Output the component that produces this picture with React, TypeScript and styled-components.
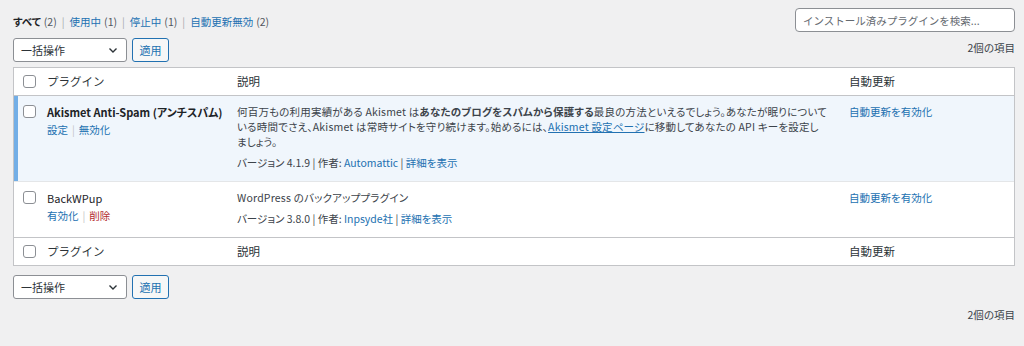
import React from "react";
import styled, { createGlobalStyle, css } from "styled-components";

const Global = createGlobalStyle`
  html, body { margin: 0; padding: 0; background: #f0f0f1; }
  body {
    font-family: "Noto Sans CJK JP", "Noto Sans", sans-serif;
    font-size: 10.5px;
    color: #3c434a;
    font-feature-settings: "palt";
  }
  * { box-sizing: border-box; }
`;

const Wrap = styled.div`
  padding: 8px 9px 20px 13px;
`;

const TopBar = styled.div`
  display: flex;
  justify-content: space-between;
  align-items: center;
  height: 24px;
`;

const Filters = styled.ul`
  display: flex;
  align-items: center;
  margin: 0;
  padding: 4px 0 0;
  list-style: none;
  line-height: 18px;
`;

const FilterItem = styled.li`
  display: flex;
  align-items: center;
`;

const FilterLink = styled.a<{ $current?: boolean }>`
  color: ${(p) => (p.$current ? "#1d2327" : "#2271b1")};
  font-weight: ${(p) => (p.$current ? 700 : 400)};
  text-decoration: none;
`;

const FilterCount = styled.span`
  color: #50575e;
  margin-left: 3px;
`;

const Sep = styled.span`
  color: #a7aaad;
  margin: 0 5px;
`;

const Search = styled.input`
  width: 220px;
  height: 24px;
  border: 1px solid #8c8f94;
  border-radius: 4px;
  background: #fff;
  padding: 0 7px;
  font: inherit;
  font-size: 10.5px;
  font-feature-settings: normal;
  color: #2c3338;
  &::placeholder { color: #646970; }
`;

const TableNav = styled.div<{ $top?: boolean }>`
  display: flex;
  justify-content: space-between;
  align-items: center;
  height: 24px;
  margin-top: ${(p) => (p.$top ? "6px" : "9px")};
`;

const BulkActions = styled.div`
  display: flex;
  gap: 5px;
`;

const BulkSelect = styled.div`
  width: 114px;
  height: 24px;
  border: 1px solid #8c8f94;
  border-radius: 3px;
  background: #fff;
  display: flex;
  align-items: center;
  justify-content: space-between;
  padding: 0 7px;
  color: #2c3338;
  font-size: 11px;
`;

const ApplyButton = styled.button`
  height: 24px;
  width: 37px;
  padding: 0;
  border: 1px solid #2271b1;
  border-radius: 3px;
  background: #f6f7f7;
  color: #2271b1;
  font: inherit;
  font-size: 11px;
`;

const Count = styled.div`
  color: #3c434a;
  line-height: 18px;
  margin-bottom: 4px;
`;

const CountRow = styled.div`
  text-align: right;
  line-height: 18px;
  margin-top: 7px;
`;

const Table = styled.table`
  width: 100%;
  margin-top: 5px;
  border: 1px solid #c3c4c7;
  border-spacing: 0;
  border-collapse: separate;
  background: #fff;
  table-layout: fixed;
`;

const Col = styled.col<{ $w?: number }>`
  ${(p) => p.$w && css`width: ${p.$w}px;`}
`;

const HeadCell = styled.th<{ $check?: boolean; $foot?: boolean }>`
  text-align: left;
  font-weight: 400;
  color: #2c3338;
  font-size: 11.5px;
  font-feature-settings: normal;
  line-height: 19px;
  padding: ${(p) => (p.$check ? "4px 0 4px 9px" : "4px 10px")};
  vertical-align: middle;
  ${(p) =>
    p.$foot
      ? css`border-top: 1px solid #c3c4c7;`
      : css`border-bottom: 1px solid #c3c4c7;`}
`;

const Row = styled.tr<{ $active?: boolean }>`
  background: ${(p) => (p.$active ? "#f0f6fc" : "#fff")};
  ${(p) =>
    p.$active &&
    css`
      & > * { border-bottom: 1px solid #e4e6e8; }
    `}
`;

const CheckCell = styled.th<{ $active?: boolean }>`
  padding: 9px 0 0 9px;
  vertical-align: top;
  box-shadow: ${(p) => (p.$active ? "inset 4px 0 0 #72aee6" : "none")};
`;

const Cell = styled.td`
  padding: 8px 10px 11px;
  vertical-align: top;
`;

const Checkbox = styled.span`
  display: block;
  width: 13px;
  height: 13px;
  border: 1px solid #8c8f94;
  border-radius: 3px;
  background: #fff;
`;

const PluginTitle = styled.div<{ $active?: boolean }>`
  line-height: 16px;
  font-size: 11px;
  white-space: nowrap;
  color: #1d2327;
  font-weight: ${(p) => (p.$active ? 700 : 400)};
`;

const RowActions = styled.div`
  margin-top: 2px;
  line-height: 16px;
  display: flex;
  align-items: center;
`;

const ActionLink = styled.a<{ $danger?: boolean }>`
  color: ${(p) => (p.$danger ? "#b32d2e" : "#2271b1")};
  text-decoration: none;
`;

const ActionSep = styled.span`
  color: #c3c4c7;
  margin: 0 4px;
`;

const Desc = styled.p`
  margin: 0;
  line-height: 15px;
  letter-spacing: 0.2px;
`;

const Version = styled.div`
  margin-top: 6px;
  line-height: 15px;
`;

const Link = styled.a<{ $underline?: boolean }>`
  color: #2271b1;
  text-decoration: ${(p) => (p.$underline ? "underline" : "none")};
`;

const AutoLink = styled.a`
  color: #2271b1;
  text-decoration: none;
  line-height: 16px;
  display: block;
`;

const Chevron = () => (
  <svg width="12" height="12" viewBox="0 0 12 12" aria-hidden="true">
    <path d="M2.5 4.5 L6 8 L9.5 4.5" fill="none" stroke="#2c3338" strokeWidth="1.4" />
  </svg>
);

const Nav = ({ top }: { top?: boolean }) => (
  <TableNav $top={top}>
    <BulkActions>
      <BulkSelect>
        <span>一括操作</span>
        <Chevron />
      </BulkSelect>
      <ApplyButton>適用</ApplyButton>
    </BulkActions>
    {top && <Count>2個の項目</Count>}
  </TableNav>
);

const HeaderRow = ({ foot }: { foot?: boolean }) => (
  <tr>
    <HeadCell $check $foot={foot}>
      <Checkbox />
    </HeadCell>
    <HeadCell $foot={foot}>プラグイン</HeadCell>
    <HeadCell $foot={foot}>説明</HeadCell>
    <HeadCell $foot={foot}>自動更新</HeadCell>
  </tr>
);

export default function App() {
  return (
    <>
      <Global />
      <Wrap>
        <TopBar>
          <Filters>
            <FilterItem>
              <FilterLink $current>すべて</FilterLink>
              <FilterCount>(2)</FilterCount>
              <Sep>|</Sep>
            </FilterItem>
            <FilterItem>
              <FilterLink>使用中</FilterLink>
              <FilterCount>(1)</FilterCount>
              <Sep>|</Sep>
            </FilterItem>
            <FilterItem>
              <FilterLink>停止中</FilterLink>
              <FilterCount>(1)</FilterCount>
              <Sep>|</Sep>
            </FilterItem>
            <FilterItem>
              <FilterLink>自動更新無効</FilterLink>
              <FilterCount>(2)</FilterCount>
            </FilterItem>
          </Filters>
          <Search placeholder="インストール済みプラグインを検索..." />
        </TopBar>

        <Nav top />

        <Table>
          <colgroup>
            <Col $w={23} />
            <Col $w={190} />
            <Col $w={612} />
            <Col />
          </colgroup>
          <thead>
            <HeaderRow />
          </thead>
          <tbody>
            <Row $active>
              <CheckCell $active>
                <Checkbox />
              </CheckCell>
              <Cell>
                <PluginTitle $active>Akismet Anti-Spam (アンチスパム)</PluginTitle>
                <RowActions>
                  <ActionLink>設定</ActionLink>
                  <ActionSep>|</ActionSep>
                  <ActionLink>無効化</ActionLink>
                </RowActions>
              </Cell>
              <Cell>
                <Desc>
                  何百万もの利用実績がある Akismet は<strong>あなたのブログをスパムから保護する</strong>最良の方法といえるでしょう。あなたが眠りについて<br />
                  いる時間でさえ、Akismet は常時サイトを守り続けます。始めるには、<Link $underline>Akismet 設定ページ</Link>に移動してあなたの API キーを設定し<br />
                  ましょう。
                </Desc>
                <Version>
                  バージョン 4.1.9 | 作者: <Link>Automattic</Link> | <Link>詳細を表示</Link>
                </Version>
              </Cell>
              <Cell>
                <AutoLink>自動更新を有効化</AutoLink>
              </Cell>
            </Row>
            <Row>
              <CheckCell>
                <Checkbox />
              </CheckCell>
              <Cell>
                <PluginTitle>BackWPup</PluginTitle>
                <RowActions>
                  <ActionLink>有効化</ActionLink>
                  <ActionSep>|</ActionSep>
                  <ActionLink $danger>削除</ActionLink>
                </RowActions>
              </Cell>
              <Cell>
                <Desc>WordPress のバックアッププラグイン</Desc>
                <Version>
                  バージョン 3.8.0 | 作者: <Link>Inpsyde社</Link> | <Link>詳細を表示</Link>
                </Version>
              </Cell>
              <Cell>
                <AutoLink>自動更新を有効化</AutoLink>
              </Cell>
            </Row>
          </tbody>
          <tfoot>
            <HeaderRow foot />
          </tfoot>
        </Table>

        <Nav />
        <CountRow>2個の項目</CountRow>
      </Wrap>
    </>
  );
}
